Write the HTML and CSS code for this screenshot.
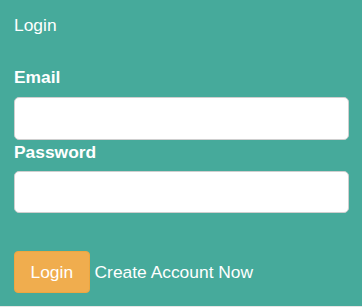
FILE: index.html
```html
<!DOCTYPE html>
<html>
<head>
<meta charset="utf-8">
<link rel="stylesheet" href="styles.css">
</head>
<body>
<div class="panel">
  <div class="title">Login</div>
  <form class="form">
    <label class="label" for="email">Email</label>
    <input class="input input-email" id="email" type="text">
    <label class="label label-pw" for="pw">Password</label>
    <input class="input input-pw" id="pw" type="password">
    <div class="actions">
      <button type="button" class="btn">Login</button>
      <span class="link">Create Account Now</span>
    </div>
  </form>
</div>
</body>
</html>
```
FILE: styles.css
```css
html, body {
  margin: 0;
  padding: 0;
  background: #e6e6e6;
}
body {
  font-family: "Liberation Sans", Arial, sans-serif;
  font-size: 17.4px;
  color: #fff;
}
.panel {
  background: #46aa9b;
  height: 306px;
  box-sizing: border-box;
  padding: 15px 14px 0 14px;
}
.title {
  line-height: 20px;
}
.form {
  display: flex;
  flex-direction: column;
  margin-top: 32px;
}
.label {
  display: block;
  font-weight: bold;
  line-height: 20px;
}
.label-pw {
  margin-top: 2px;
}
.input {
  display: block;
  box-sizing: border-box;
  width: 335px;
  height: 43px;
  border: 1px solid #cfcfcf;
  border-radius: 5px;
  background: #fff;
  margin: 0;
  padding: 6px 10px;
  font: inherit;
  color: #333;
}
.input-email {
  margin-top: 10px;
}
.input-pw {
  margin-top: 9px;
  height: 42px;
}
.actions {
  display: flex;
  align-items: center;
  gap: 5px;
  margin-top: 38px;
}
.btn {
  height: 42px;
  box-sizing: border-box;
  padding: 0 15.5px;
  border: 1px solid #eea640;
  border-radius: 4px;
  background: #f0ad4e;
  color: #fff;
  font: inherit;
  line-height: 20px;
}
.link {
  line-height: 20px;
  color: #fff;
}
```
